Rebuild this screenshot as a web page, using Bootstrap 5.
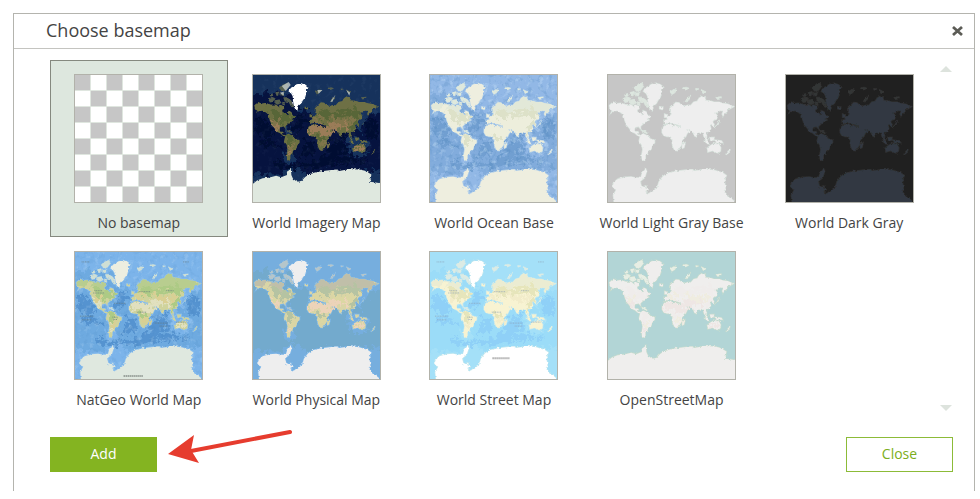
<!DOCTYPE html>
<html lang="en">
<head>
<meta charset="utf-8">
<meta name="viewport" content="width=device-width, initial-scale=1">
<title>Choose basemap</title>
<link href="https://cdn.jsdelivr.net/npm/bootstrap@5.3.0/dist/css/bootstrap.min.css" rel="stylesheet">
<style>
body { font-family: "Open Sans", "Noto Sans", sans-serif; font-size: 14px; line-height: 20px; color: #444; background: #fff; padding: 13px 5px 8px 13px; }
.dialog-frame { border: 1px solid #b4b4ae; border-bottom: 0; }
.dialog-head { border-bottom: 1px solid #c4c4c0; height: 35px; padding: 0 9px 0 32px; }
.dialog-title { font-size: 18px; line-height: 32px; padding-bottom: 2px; color: #444; }
.dialog-main { padding: 11px 21px 19px 36px; }
.close-x { width: 14px; height: 14px; }
.tile { height: 177px; padding: 13px 0 0; border: 1px solid transparent; background: none; color: #444; }
.tile.selected { background: #dde7de; border-color: #85897f; }
.thumb { width: 129px; height: 129px; border: 1px solid #b2b2aa; overflow: hidden; }
.thumb svg { width: 100%; height: 100%; display: block; }
.tile-label { margin-top: 10px; }
.checker { background: linear-gradient(90deg, transparent 15px, #dfe6df 15px) 0 0 / 16px 16px, linear-gradient(transparent 15px, #dfe6df 15px) 0 0 / 16px 16px, repeating-conic-gradient(#fff 0 25%, #c6c6c6 0 50%) 0 0 / 32px 32px; }
.scroll-rail { width: 15px; padding: 6px 0 3px; }
.scroll-rail svg { width: 12px; height: 6px; fill: #dde3dd; }
.dialog-foot { margin-top: 23px; }
.action { width: 107px; height: 35px; font-size: 14px; line-height: 20px; padding: 0 0 2px; border-radius: 0; }
.action-add { background: #84b421; border: 1px solid #84b421; color: #fff; }
.action-close { background: #fff; border: 1px solid #8cbb38; color: #7cae20; }
.pointer-arrow { left: 117px; top: -9px; width: 128px; height: 40px; }

.w-sea { fill: var(--sea); }
.w-shelf { fill: var(--shelf, transparent); }
.w-deep { fill: var(--deep, transparent); }
.w-land { fill: var(--land); stroke: var(--coast, none); stroke-width: 4; paint-order: stroke; }
.w-arctic { fill: var(--arctic, var(--land)); stroke: var(--coast, none); stroke-width: 3; paint-order: stroke; }
.w-tundra { fill: var(--tundra, transparent); }
.w-forest { fill: var(--forest, transparent); }
.w-desert { fill: var(--desert, transparent); }
.w-steppe { fill: var(--steppe, transparent); }
.w-patches { opacity: .8; }
.w-grain-dark { opacity: var(--grain, 0); }
.w-grain-light { opacity: var(--glint, 0); }
.w-green { fill: var(--greenland, var(--land)); stroke: var(--coast, none); stroke-width: 4; paint-order: stroke; }
.w-ice { fill: var(--ice); stroke: var(--coast, none); stroke-width: 4; paint-order: stroke; }
.w-mark { fill: none; stroke: var(--mark, transparent); stroke-width: 3; stroke-dasharray: 3 2; opacity: .7; }
.m-imagery { --sea: #06133f; --shelf: #12305c; --deep: #020d30; --land: #6c7042; --arctic: #566050; --tundra: #6f7046; --forest: #566538; --desert: #a8805f; --steppe: #877650; --greenland: #fff; --ice: #dfe8df; --glint: .04; }
.m-ocean { --sea: #82acdc; --shelf: #92b8e6; --deep: #719fd1; --land: #edeedc; --coast: #b3d0e8; --arctic: #dfe9dd; --tundra: #dfe7d7; --forest: #d9dec4; --greenland: #eeeedf; --ice: #eeeedf; --grain: .2; --glint: .35; }
.m-light { --sea: #c6c6c6; --land: #eee; --coast: #d7e2dc; --arctic: #dde6df; --ice: #eee; }
.m-dark { --sea: #202020; --land: #303842; --coast: #303030; --arctic: #333536; --ice: #303842; }
.m-natgeo { --sea: #6eaae0; --shelf: #7cb4ea; --deep: #5593d0; --land: #cfd39c; --coast: #8fc1ed; --arctic: #cfdfd5; --tundra: #b2cc8c; --forest: #a4c980; --desert: #e5e4c9; --steppe: #dbcf91; --greenland: #edeee0; --ice: #dfe8df; --mark: #67797c; --grain: .1; --glint: .2; }
.m-physical { --sea: #73aacd; --shelf: #76aede; --land: #d9d5a6; --coast: #7fb8ea; --arctic: #b5c6cb; --tundra: #b9b9aa; --forest: #acbea2; --desert: #f0d3bf; --steppe: #dbd7a3; --greenland: #eee; --ice: #eee; }
.m-street { --sea: #9bdcf8; --shelf: #a4e0f8; --deep: #8fd0f7; --land: #f7f3d2; --coast: #c6e8ed; --arctic: #dcebe4; --tundra: #e8ead2; --forest: #e2e2b6; --desert: #f8f3d2; --steppe: #f0eac9; --greenland: #fff; --ice: #fff; --mark: #8ca0b5; }
.m-osm { --sea: #b2d5d6; --land: #efeeed; --coast: #c7dbcc; --arctic: #e7eee4; --forest: #efecea; --desert: #eee4e1; --steppe: #efecdc; --ice: #efeeed; }
</style>
<script src="https://cdn.jsdelivr.net/npm/bootstrap@5.3.0/dist/js/bootstrap.bundle.min.js" defer></script>
</head>
<body>
<svg width="0" height="0" class="position-absolute" aria-hidden="true">
  <defs>
    <filter id="rough" x="0" y="0" width="100%" height="100%">
      <feTurbulence type="fractalNoise" baseFrequency=".12" numOctaves="3" seed="4" result="n"/>
      <feDisplacementMap in="SourceGraphic" in2="n" scale="9" xChannelSelector="R" yChannelSelector="G"/>
    </filter>
    <filter id="patchy" x="0" y="0" width="100%" height="100%">
      <feTurbulence type="fractalNoise" baseFrequency=".07" numOctaves="4" seed="9" result="n"/>
      <feDisplacementMap in="SourceGraphic" in2="n" scale="45" xChannelSelector="R" yChannelSelector="G"/>
      <feGaussianBlur stdDeviation="1.5"/>
    </filter>
    <filter id="grain-dark" x="0" y="0" width="100%" height="100%">
      <feTurbulence type="fractalNoise" baseFrequency=".06" numOctaves="4" seed="3"/>
      <feColorMatrix values="0 0 0 0 .05  0 0 0 0 .2  0 0 0 0 .45  5 0 0 0 -2.6"/>
    </filter>
    <filter id="grain-light" x="0" y="0" width="100%" height="100%">
      <feTurbulence type="fractalNoise" baseFrequency=".06" numOctaves="4" seed="17"/>
      <feColorMatrix values="0 0 0 0 .6  0 0 0 0 .78  0 0 0 0 .95  5 0 0 0 -2.8"/>
    </filter>
    <path id="mainland" d="M28 119 40 109 50 114 62 112 78 117 94 117 102 124 108 118 120 124 117 130 112 132 113 140 124 143 126 150 130 146 130 135 139 138 145 146 151 154 141 160 147 165 136 169 128 177 122 183 123 191 117 183 106 185 103 193 108 199 114 197 117 202 113 205 123 211 116 212 106 203 94 198 89 188 80 178 74 162 72 151 66 143 56 136 45 134 33 142 37 134 30 131ZM122 210 131 205 143 211 150 218 165 224 165 232 158 240 154 252 145 258 143 265 137 270 137 280 134 287 127 281 126 268 129 252 126 239 118 226ZM188 187 198 178 215 176 220 182 230 181 243 184 247 193 252 203 263 204 259 213 248 224 247 237 241 246 234 256 226 255 220 243 218 232 219 222 213 213 202 213 192 209 187 200ZM249 236 257 232 254 246 248 249ZM195 175 193 163 204 162 202 155 211 151 217 144 211 138 211 128 220 119 229 110 239 111 245 118 258 121 266 118 274 119 283 109 294 106 299 97 311 90 319 97 319 104 333 105 344 109 359 109 373 113 386 115 398 120 402 124 391 130 384 130 384 137 376 144 372 151 369 145 373 136 363 134 354 140 348 141 355 151 352 161 343 164 340 170 345 176 343 182 337 176 332 178 335 188 332 197 322 200 318 203 323 210 321 216 327 223 322 226 314 213 312 203 306 199 297 203 292 214 285 211 281 198 270 194 261 190 263 195 270 197 263 204 250 208 245 198 241 188 245 181 231 176 225 178 223 171 214 173 207 168 203 174ZM195 155 195 145 203 148 203 155ZM318 224 326 227 328 236 321 234ZM332 216 345 216 343 224 334 225ZM345 223 367 226 371 232 355 231ZM324 248 334 240 343 235 351 237 354 232 359 236 365 247 364 257 357 263 349 260 340 256 326 260ZM388 257 394 252 387 264 380 268ZM354 178 360 166 357 176 347 184ZM180 123 190 124 187 131 180 129Z"/>
    <path id="islands" d="M69 99 80 93 92 97 87 108 75 110ZM90 103 103 101 110 111 99 117 88 113ZM74 87 83 83 85 90 77 92ZM91 80 103 77 105 85 96 91ZM103 65 115 56 127 51 132 61 122 74 111 78ZM107 82 118 80 117 90 108 91ZM115 94 126 94 139 103 148 118 143 126 137 119 132 109 120 107ZM112 108 119 110 121 119 113 117ZM212 78 222 71 231 72 226 81 217 86ZM246 68 260 64 269 67 259 72ZM289 68 299 69 290 73ZM257 108 266 95 274 88 269 99 264 108ZM305 71 318 77 312 84ZM350 94 367 93 365 99 355 101ZM122 192 136 197 143 202 137 203Z"/>
    <path id="greenland" d="M131 76 137 66 150 60 154 56 168 52 182 56 192 64 184 70 185 82 182 94 174 105 171 112 162 120 158 135 151 132 147 117 145 105 144 91 139 82Z"/>
    <path id="ice-wide" d="M10 362 24 356 36 346 53 339 74 337 94 332 109 336 127 329 132 315 138 307 140 329 145 341 156 349 169 349 181 336 194 326 211 322 231 318 248 316 261 314 276 313 285 317 300 314 325 312 345 313 360 316 371 321 382 328 378 350 395 352 430 358V430H10Z"/>
    <path id="ice-bays" d="M37 366 42 352 53 342 74 336 94 335 109 338 123 338 127 325 135 315 137 308 141 318 135 337 121 349 126 367 137 362 143 374 133 380 147 386 163 374 172 371 178 350 190 334 204 324 231 318 261 314 276 313 285 317 304 314 325 313 345 315 371 323 382 331 376 345 379 371 374 379 388 394 405 408V430H44L40 390 49 374Z"/>
    <clipPath id="land-clip"><use href="#mainland"/></clipPath>
    <symbol id="world" viewBox="24 27 384 384">
      <rect class="w-sea" x="24" y="27" width="384" height="384"/>
      <g filter="url(#patchy)">
        <path class="w-shelf" d="M-20 -20H450V154L382 145 352 191 326 188 250 138 205 178 194 124 165 142 150 90 70 77 -20 104ZM-20 326 120 328 142 296 184 328 450 313V450H-20ZM116 181 143 193 147 210 119 213ZM308 211 371 220 379 238 361 273 320 271 306 237ZM119 255 148 256 150 293 122 292Z"/>
        <path class="w-deep" d="M40 151 78 179 86 206 57 218 31 200ZM154 161 176 151 189 164 159 205 136 190ZM174 222 207 230 214 259 180 285 165 274 185 247ZM35 232 65 221 98 231 107 249 63 244ZM255 239 282 220 306 237 304 258 275 276 247 291 217 286 246 264ZM368 157 403 175 399 218 380 222 360 206ZM91 286 143 300 201 290 304 276 373 286 294 296 199 312 90 304ZM284 201 307 220 294 227Z"/>
      </g>
      <g class="w-grain-dark"><rect x="24" y="27" width="384" height="384" filter="url(#grain-dark)"/></g>
      <g class="w-grain-light"><rect x="24" y="27" width="384" height="384" filter="url(#grain-light)"/></g>
      <g filter="url(#rough)">
        <use class="w-arctic" href="#islands"/>
        <use class="w-land" href="#mainland"/>
        <use class="w-green" href="#greenland"/>
        <g clip-path="url(#land-clip)"><g class="w-patches" filter="url(#patchy)">
          <path class="w-tundra" d="M24 105H120L128 140 91 141 65 126 24 138ZM205 100 300 82 408 118 373 146 320 132 273 140 210 145Z"/>
          <path class="w-forest" d="M75 137 112 140 155 152 132 176 109 172 84 152ZM119 208 137 207 148 225 139 238 125 237ZM216 137 243 128 275 143 331 124 356 143 347 163 304 149 264 156 225 158ZM216 213 241 211 242 225 227 229ZM325 173 342 170 336 196 310 201Z"/>
          <path class="w-desert" d="M187 181 244 179 271 193 258 205 238 207 187 203ZM252 171 298 164 312 180 278 196 252 183ZM329 244 355 237 358 253 332 258ZM75 170 100 175 104 194 89 192ZM127 238 135 243 130 275 125 271Z"/>
          <path class="w-steppe" d="M251 156 296 155 331 163 321 177 289 177 256 170ZM205 159 236 157 233 172 207 175ZM82 155 104 159 109 177 85 174ZM225 232 247 225 247 247 231 256ZM135 239 157 232 150 254 136 264Z"/>
        </g></g>
      </g>
    </symbol>
    <symbol id="cap-wide" viewBox="24 27 384 384"><use class="w-ice" href="#ice-wide" filter="url(#rough)"/></symbol>
    <symbol id="cap-bays" viewBox="24 27 384 384"><use class="w-ice" href="#ice-bays" filter="url(#rough)"/></symbol>
    <symbol id="place-marks" viewBox="24 27 384 384">
      <path class="w-mark" d="M83 144H106M79 151H113M218 147H253M300 144H322M137 224H153M138 231H151M211 209H240M39 221H80M45 232H74M265 242H304M280 251H303M142 182H178M330 239H360M351 57H368M44 57H68"/>
    </symbol>
  </defs>
</svg>

<main class="dialog-frame" role="dialog" aria-labelledby="dialog-title">
  <header class="dialog-head d-flex justify-content-between align-items-center">
    <h1 class="dialog-title fw-normal m-0" id="dialog-title">Choose basemap</h1>
    <button type="button" class="btn p-0 border-0 d-flex" aria-label="Close dialog"><svg class="close-x" viewBox="0 0 14 14" aria-hidden="true"><path d="M2 3 11 11M11 3 2 11" stroke="#5c5c56" stroke-width="2.8"/></svg></button>
  </header>
  <div class="dialog-main">
    <div class="d-flex">
      <div class="row row-cols-2 row-cols-sm-3 row-cols-md-5 g-0 flex-grow-1">
        <div class="col"><button type="button" class="tile selected w-100 d-flex flex-column align-items-center" aria-pressed="true"><span class="thumb checker"></span><span class="tile-label">No basemap</span></button></div>
        <div class="col"><button type="button" class="tile w-100 d-flex flex-column align-items-center"><span class="thumb m-imagery"><svg viewBox="0 0 128 128" aria-hidden="true"><use href="#world"/><use href="#cap-wide"/><path d="M29 11 36 7 38 10 33 16ZM27 18 31 17 31 21ZM65 15 70 15 66 19ZM78 27 83 20 80 27ZM94 15 98 18 97 21Z" fill="#c3ccca" opacity=".8"/></svg></span><span class="tile-label">World Imagery Map</span></button></div>
        <div class="col"><button type="button" class="tile w-100 d-flex flex-column align-items-center"><span class="thumb m-ocean"><svg viewBox="0 0 128 128" aria-hidden="true"><use href="#world"/><use href="#cap-bays"/></svg></span><span class="tile-label">World Ocean Base</span></button></div>
        <div class="col"><button type="button" class="tile w-100 d-flex flex-column align-items-center"><span class="thumb m-light"><svg viewBox="0 0 128 128" aria-hidden="true"><use href="#world"/><use href="#cap-bays"/></svg></span><span class="tile-label">World Light Gray Base</span></button></div>
        <div class="col"><button type="button" class="tile w-100 d-flex flex-column align-items-center"><span class="thumb m-dark"><svg viewBox="0 0 128 128" aria-hidden="true"><use href="#world"/><use href="#cap-bays"/></svg></span><span class="tile-label">World Dark Gray</span></button></div>
        <div class="col"><button type="button" class="tile w-100 d-flex flex-column align-items-center"><span class="thumb m-natgeo"><svg viewBox="0 0 128 128" aria-hidden="true"><use href="#world"/><use href="#cap-bays"/><use href="#place-marks"/><path d="M49 125H69" stroke="#8b938d" stroke-width="2" stroke-dasharray="1.2 .8"/></svg></span><span class="tile-label">NatGeo World Map</span></button></div>
        <div class="col"><button type="button" class="tile w-100 d-flex flex-column align-items-center"><span class="thumb m-physical"><svg viewBox="0 0 128 128" aria-hidden="true"><use href="#world"/><use href="#cap-bays"/></svg></span><span class="tile-label">World Physical Map</span></button></div>
        <div class="col"><button type="button" class="tile w-100 d-flex flex-column align-items-center"><span class="thumb m-street"><svg viewBox="0 0 128 128" aria-hidden="true"><use href="#world"/><use href="#cap-bays"/><use href="#place-marks"/><path d="M63 107H80" stroke="#9a9a9a" stroke-width="2" stroke-dasharray="1.2 .8"/></svg></span><span class="tile-label">World Street Map</span></button></div>
        <div class="col"><button type="button" class="tile w-100 d-flex flex-column align-items-center"><span class="thumb m-osm"><svg viewBox="0 0 128 128" aria-hidden="true"><use href="#world"/><use href="#cap-wide"/></svg></span><span class="tile-label">OpenStreetMap</span></button></div>
      </div>
      <div class="scroll-rail d-flex flex-column justify-content-between align-items-center flex-shrink-0">
        <button type="button" class="btn p-0 border-0 d-flex" aria-label="Scroll up"><svg viewBox="0 0 12 6" aria-hidden="true"><path d="M6 0 12 6H0Z"/></svg></button>
        <button type="button" class="btn p-0 border-0 d-flex" aria-label="Scroll down"><svg viewBox="0 0 12 6" aria-hidden="true"><path d="M0 0H12L6 6Z"/></svg></button>
      </div>
    </div>
    <footer class="dialog-foot d-flex justify-content-between">
      <div class="position-relative">
        <button type="button" class="btn action action-add">Add</button>
        <svg class="pointer-arrow position-absolute" viewBox="0 0 128 40" aria-hidden="true"><path d="M24 23 123 4" stroke="#e63c2e" stroke-width="4" stroke-linecap="round"/><path d="M1 26 27 7 24 22 32 35Z" fill="#e63c2e"/></svg>
      </div>
      <button type="button" class="btn action action-close">Close</button>
    </footer>
  </div>
</main>
</body>
</html>
